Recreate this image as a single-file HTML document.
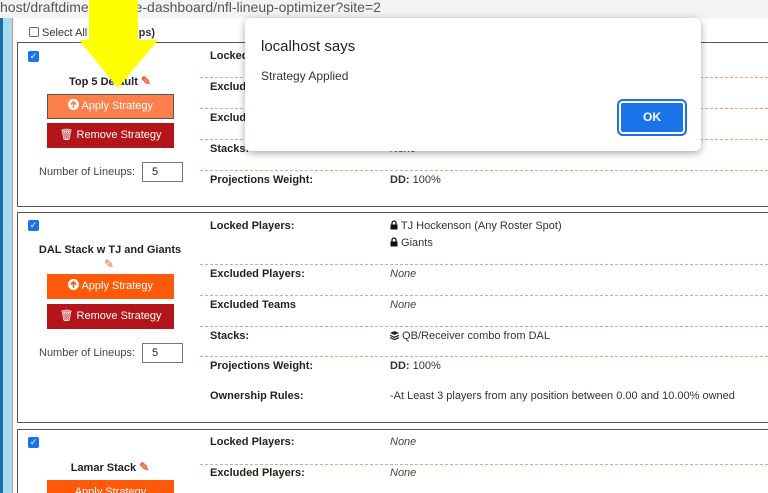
<!DOCTYPE html>
<html><head><style>
*{margin:0;padding:0;box-sizing:border-box}
html,body{width:768px;height:493px;overflow:hidden}
body{background:#fff;font-family:"Liberation Sans",sans-serif;font-size:11px;color:#222;position:relative}
.abs{position:absolute}
.addr{left:0;top:0;width:768px;height:18px;background:#f1f3f4;color:#555;font-size:14px;line-height:14px}
.strip1{left:0;top:18px;width:3px;height:475px;background:#1f6fa3}
.strip2{left:3px;top:18px;width:9px;height:475px;background:#a6dcef}
.strip3{left:12px;top:18px;width:1px;height:475px;background:#f08a6a}
.card{left:17px;width:760px;border:1.5px solid #555;border-right:none}
.lbl{left:210px;font-weight:bold;color:#222}
.val{left:390px;color:#333}
.it{font-style:italic;color:#444}
.dash{left:200px;width:568px;border-top:1px dashed #f4a080}
.title{width:190px;left:15px;text-align:center;font-weight:bold}
.btn{left:47px;width:127px;height:25px;color:#fff;text-align:center;line-height:25px;font-size:11px}
.ap{background:#ff5a0a}
.rm{background:#b3151b}
.cb{left:28px;width:11px;height:11px;background:#1a73e8;border-radius:2px;color:#fff;font-size:9px;line-height:11px;text-align:center}
.nl{left:39px;color:#444}
.inp{left:142px;width:41px;height:20px;border:1px solid #777;padding-left:9px;line-height:18px}
.pen{color:#f0603a;font-size:12px}
svg.i{vertical-align:-1px}
</style></head><body>
<div class="abs addr">host/draftdime/c&nbsp;&nbsp;&nbsp;&nbsp;&nbsp;&nbsp;me-dashboard/nfl-lineup-optimizer?site=2</div>
<div class="abs strip1"></div><div class="abs strip2"></div><div class="abs strip3"></div>
<div class="abs" style="left:29px;top:27px;width:10px;height:10px;border:1px solid #666;border-radius:2px"></div>
<div class="abs" style="left:42px;top:27px;color:#333">Select All <b>(12 Lineups)</b></div>

<div class="abs card" style="top:42px;height:165px"></div>
<div class="abs card" style="top:212px;height:211px"></div>
<div class="abs card" style="top:429px;height:80px"></div>

<!-- card1 -->
<div class="abs cb" style="top:51px">✓</div>
<div class="abs title" style="top:74px">Top 5 Default <span class="pen">✎</span></div>
<div class="abs btn" style="top:94px;background:#ff7f4a;border:1.5px solid #555;line-height:22px"><svg class="i" width="11" height="11" viewBox="0 0 12 12"><circle cx="6" cy="6" r="6" fill="#fff"/><path d="M6 9.5V3M3 6l3-3 3 3" stroke="#ff7f4a" stroke-width="1.8" fill="none"/></svg> Apply Strategy</div>
<div class="abs btn rm" style="top:123px">🗑 Remove Strategy</div>
<div class="abs nl" style="top:166px">Number of Lineups:</div>
<div class="abs inp" style="top:162px">5</div>
<div class="abs lbl" style="top:50px">Locked Players:</div>
<div class="abs dash" style="top:77px"></div>
<div class="abs lbl" style="top:81px">Excluded Players:</div>
<div class="abs dash" style="top:108px"></div>
<div class="abs lbl" style="top:112px">Excluded Teams</div>
<div class="abs dash" style="top:139px"></div>
<div class="abs lbl" style="top:143px">Stacks:</div>
<div class="abs val it" style="top:143px">None</div>
<div class="abs dash" style="top:170px"></div>
<div class="abs lbl" style="top:174px">Projections Weight:</div>
<div class="abs val" style="top:174px"><b>DD:</b> 100%</div>

<!-- card2 -->
<div class="abs cb" style="top:220px">✓</div>
<div class="abs title" style="top:244px">DAL Stack w TJ and Giants</div>
<div class="abs pen" style="left:104px;top:257px">✎</div>
<div class="abs btn ap" style="top:274px"><svg class="i" width="11" height="11" viewBox="0 0 12 12"><circle cx="6" cy="6" r="6" fill="#fff"/><path d="M6 9.5V3M3 6l3-3 3 3" stroke="#ff5a0a" stroke-width="1.8" fill="none"/></svg> Apply Strategy</div>
<div class="abs btn rm" style="top:304px">🗑 Remove Strategy</div>
<div class="abs nl" style="top:347px">Number of Lineups:</div>
<div class="abs inp" style="top:343px">5</div>
<div class="abs lbl" style="top:220px">Locked Players:</div>
<div class="abs val" style="top:220px"><svg class="i" width="8" height="10" viewBox="0 0 8 10"><path d="M2 4.5V3a2 2 0 0 1 4 0v1.5" stroke="#111" stroke-width="1.3" fill="none"/><rect x="0.5" y="4.5" width="7" height="5" fill="#111"/></svg> TJ Hockenson (Any Roster Spot)</div>
<div class="abs val" style="top:237px"><svg class="i" width="8" height="10" viewBox="0 0 8 10"><path d="M2 4.5V3a2 2 0 0 1 4 0v1.5" stroke="#111" stroke-width="1.3" fill="none"/><rect x="0.5" y="4.5" width="7" height="5" fill="#111"/></svg> Giants</div>
<div class="abs dash" style="top:264px"></div>
<div class="abs lbl" style="top:268px">Excluded Players:</div>
<div class="abs val it" style="top:268px">None</div>
<div class="abs dash" style="top:295px"></div>
<div class="abs lbl" style="top:299px">Excluded Teams</div>
<div class="abs val it" style="top:299px">None</div>
<div class="abs dash" style="top:326px"></div>
<div class="abs lbl" style="top:330px">Stacks:</div>
<div class="abs val" style="top:330px"><svg class="i" width="9" height="9" viewBox="0 0 9 9"><path d="M4.5 0L9 2 4.5 4 0 2z" fill="#222"/><path d="M0 4.3l4.5 2 4.5-2M0 6.6l4.5 2 4.5-2" stroke="#222" stroke-width="1.2" fill="none"/></svg> QB/Receiver combo from DAL</div>
<div class="abs dash" style="top:356px"></div>
<div class="abs lbl" style="top:360px">Projections Weight:</div>
<div class="abs val" style="top:360px"><b>DD:</b> 100%</div>
<div class="abs lbl" style="top:390px">Ownership Rules:</div>
<div class="abs val" style="top:390px">-At Least 3 players from any position between 0.00 and 10.00% owned</div>

<!-- card3 -->
<div class="abs cb" style="top:437px">✓</div>
<div class="abs title" style="top:460px">Lamar Stack <span class="pen">✎</span></div>
<div class="abs btn ap" style="top:480px">Apply Strategy</div>
<div class="abs lbl" style="top:436px">Locked Players:</div>
<div class="abs val it" style="top:436px">None</div>
<div class="abs dash" style="top:464px"></div>
<div class="abs lbl" style="top:467px">Excluded Players:</div>
<div class="abs val it" style="top:467px">None</div>

<!-- arrow -->
<svg class="abs" style="left:0;top:0" width="200" height="100"><polygon points="89,0 138,0 138,40 158,40 118,88 79,40 89,40" fill="#ffff00"/></svg>

<!-- dialog -->
<div class="abs" style="left:245px;top:18px;width:456px;height:133px;background:#fff;border-radius:6px;box-shadow:0 2px 8px rgba(0,0,0,.35)">
<div class="abs" style="left:16px;top:20px;font-size:15px;color:#222">localhost says</div>
<div class="abs" style="left:16px;top:51px;font-size:12px;color:#333">Strategy Applied</div>
<div class="abs" style="left:374px;top:83px;width:66px;height:33px;background:#1a73e8;border-radius:4px;border:2px solid #fff;outline:2px solid #1a73e8;color:#fff;font-weight:bold;font-size:12px;text-align:center;line-height:29px">OK</div>
</div>
</body></html>
